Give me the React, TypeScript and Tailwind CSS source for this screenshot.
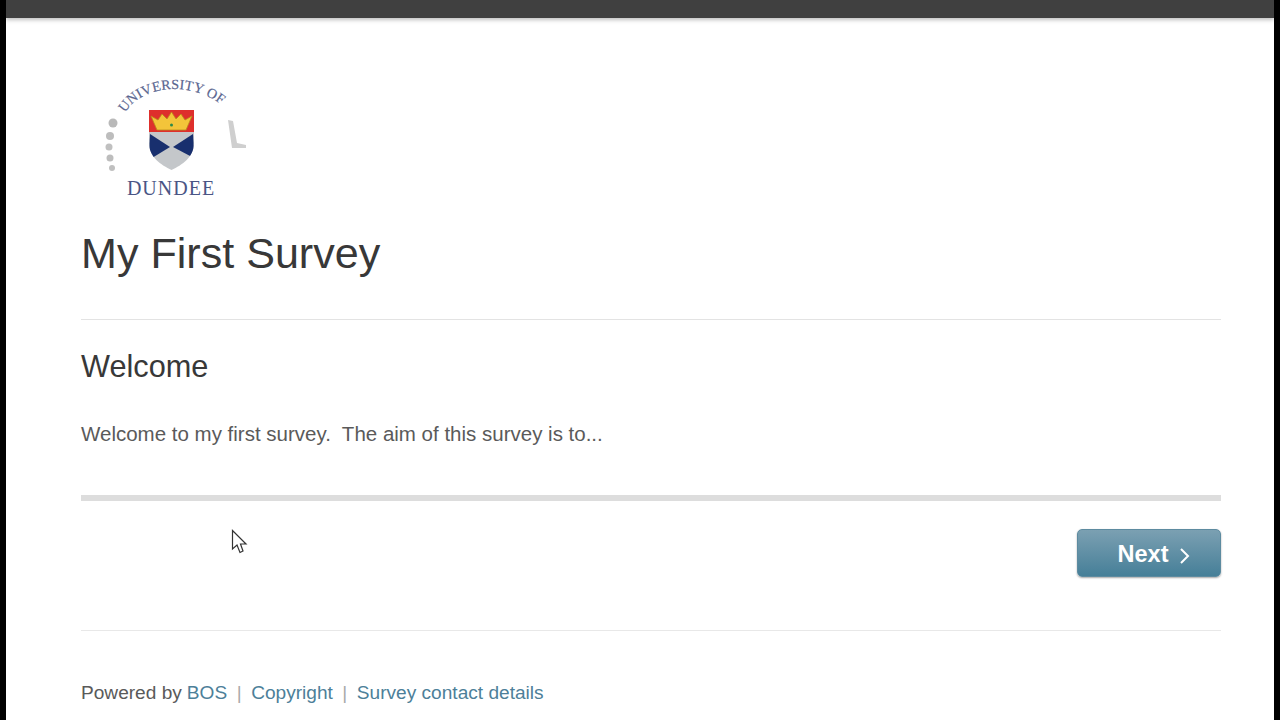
function Logo() {
  return (
    <svg width="150" height="130" viewBox="0 0 150 130" className="block">
      <defs>
        <path id="arc" d="M 25 38 C 42 9, 98 3, 130 38" fill="none" />
        <clipPath id="shield">
          <path d="M49 35 H94 V68 C94 82 82 90 71.500 95 C61 90 49 82 49 68 Z" />
        </clipPath>
      </defs>
      <text fontFamily="'Liberation Serif', serif" fontSize="14" letterSpacing="0.200" fill="#5a6690" stroke="#5a6690" strokeWidth="0.200">
        <textPath href="#arc">UNIVERSITY OF</textPath>
      </text>
      <g clipPath="url(#shield)">
        <rect x="49" y="35" width="45" height="60" fill="#c4c7ca" />
        <rect x="49" y="35" width="45" height="22" fill="#de2f2c" />
        <path d="M50 59 L70 72 L52 83 L49 80 Z" fill="#182f6e" />
        <path d="M93 59 L73 72 L92 82 L94 78 Z" fill="#182f6e" />
      </g>
      <path d="M51 41 L58 45 L62 39 L67 44 L71.500 37 L76 44 L81 39 L85 45 L92 41 L86 55 H57 Z" fill="#f3c43a" stroke="#b98a1c" strokeWidth="0.800" />
      <circle cx="71.500" cy="50" r="1.500" fill="#2d8a4a" />
      <circle cx="13" cy="48" r="4.500" fill="#b9b9b9" />
      <circle cx="10" cy="61" r="4" fill="#bdbdbd" />
      <circle cx="9" cy="72" r="3.500" fill="#c0c0c0" />
      <circle cx="10" cy="83" r="3.500" fill="#bdbdbd" />
      <circle cx="12" cy="93" r="3" fill="#c0c0c0" />
      <path d="M128 45 L133 46 L137 68 L146 70 V73 H132 Z" fill="#cfcfcf" />
      <text x="71" y="120" textAnchor="middle" fontFamily="'Liberation Serif', serif" fontSize="20" letterSpacing="1" fill="#4a5585">
        DUNDEE
      </text>
    </svg>
  );
}

function Cursor() {
  return (
    <svg width="17" height="26" viewBox="0 0 17 26" className="block">
      <path d="M1.500 1.500 V20 L6 16 L9 23.500 L12 22 L9.500 15 H15 Z" fill="#fff" stroke="#333" strokeWidth="1.200" />
    </svg>
  );
}

export default function App() {
  return (
    <div className="h-[720px] w-[1280px] overflow-hidden bg-black px-[6px] font-['Liberation_Sans',Arial,sans-serif]">
      <div className="h-full bg-white">
        <div className="h-[18px] bg-[#404040] shadow-[0_2px_4px_rgba(0,0,0,0.25)]" />
        <div className="pl-[75px] pr-[53px]">
          <div className="pl-[19px] pt-[57px]">
            <Logo />
          </div>
          <h1 className="mt-[18px] text-[43.100px] leading-[60px] text-[#383838]">My First Survey</h1>
          <div className="mt-[36px] h-px bg-[#e3e3e3]" />
          <h2 className="mt-[30px] text-[30.700px] leading-[34px] text-[#383838]">Welcome</h2>
          <p className="mt-[37px] text-[20.500px] leading-[26px] text-[#5a5a5a]">
            Welcome to my first survey.&nbsp; The aim of this survey is to...
          </p>
          <div className="mt-[48px] h-[6px] bg-[#dddddd]" />
          <div className="relative mt-[28px] flex justify-end">
            <div className="absolute left-[150px] top-0">
              <Cursor />
            </div>
            <button className="flex h-[48px] w-[144px] items-center justify-center gap-[10px] rounded-[5px] border border-[#5d8ba0] bg-gradient-to-b from-[#7ba0b2] to-[#457f98] pl-[10px] pt-[4px] text-[23.500px] font-bold text-white shadow-[0_1px_2px_rgba(0,0,0,0.35)]">
              Next
              <svg width="12" height="18" viewBox="0 0 12 18" fill="none" stroke="#fff" strokeWidth="2" className="mt-[2px]">
                <path d="M3 2 L10 9 L3 16" />
              </svg>
            </button>
          </div>
          <div className="mt-[53px] h-px bg-[#e8e8e8]" />
          <div className="mt-[49px] flex items-center text-[19.100px] leading-[26px] text-[#5a5a5a]">
            <span>Powered by</span>
            <a className="ml-[5px] text-[#4d7f99]">BOS</a>
            <span className="mx-[9.500px] text-[#aaaaaa]">|</span>
            <a className="text-[#4d7f99]">Copyright</a>
            <span className="mx-[9.500px] text-[#aaaaaa]">|</span>
            <a className="text-[#4d7f99]">Survey contact details</a>
          </div>
        </div>
      </div>
    </div>
  );
}
